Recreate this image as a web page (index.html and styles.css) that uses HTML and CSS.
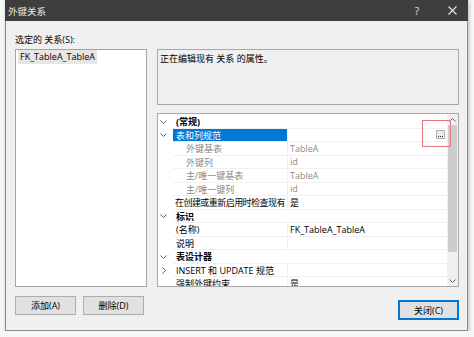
FILE: index.html
```html
<!DOCTYPE html>
<html lang="zh">
<head>
<meta charset="utf-8">
<link rel="stylesheet" href="styles.css">
</head>
<body>
<div class="dialog">
  <div class="titlebar">
    <span class="title">外键关系</span>
    <span class="tb-help">?</span>
    <span class="tb-close"><svg width="9" height="9" viewBox="0 0 9 9"><path d="M0.5 0.5L8.5 8.5M8.5 0.5L0.5 8.5" stroke="#e6e6e6" stroke-width="1.1" fill="none"/></svg></span>
  </div>
  <div class="content">
    <div class="label">选定的 关系(S):</div>
    <div></div>
    <div class="listbox"><div class="list-item">FK_TableA_TableA</div></div>
    <div class="right">
      <div class="desc">正在编辑现有 关系 的属性。</div>
      <div class="pgrid">
        <div class="rows">
          <div class="row cat"><span class="exp"><svg class="chev" viewBox="0 0 7 4"><path d="M0.5 0.5L3.5 3.5L6.5 0.5" /></svg></span><span class="name">(常规)</span></div>
          <div class="row"><span class="exp"><svg class="chev" viewBox="0 0 7 4"><path d="M0.5 0.5L3.5 3.5L6.5 0.5" /></svg></span><span class="name sel">表和列规范</span><span class="val"><span class="dots"><svg viewBox="0 0 7 7" width="7" height="7"><rect x="1" y="5" width="1" height="1"/><rect x="3" y="5" width="1" height="1"/><rect x="5" y="5" width="1" height="1"/></svg></span></span></div>
          <div class="row sub"><span class="exp"></span><span class="name">外键基表</span><span class="val">TableA</span></div>
          <div class="row sub"><span class="exp"></span><span class="name">外键列</span><span class="val">id</span></div>
          <div class="row sub"><span class="exp"></span><span class="name">主/唯一键基表</span><span class="val">TableA</span></div>
          <div class="row sub"><span class="exp"></span><span class="name">主/唯一键列</span><span class="val">id</span></div>
          <div class="row"><span class="exp"></span><span class="name tight">在创建或重新启用时检查现有</span><span class="val">是</span></div>
          <div class="row cat"><span class="exp"><svg class="chev" viewBox="0 0 7 4"><path d="M0.5 0.5L3.5 3.5L6.5 0.5" /></svg></span><span class="name">标识</span></div>
          <div class="row"><span class="exp"></span><span class="name">(名称)</span><span class="val">FK_TableA_TableA</span></div>
          <div class="row"><span class="exp"></span><span class="name">说明</span><span class="val"></span></div>
          <div class="row cat"><span class="exp"><svg class="chev" viewBox="0 0 7 4"><path d="M0.5 0.5L3.5 3.5L6.5 0.5" /></svg></span><span class="name">表设计器</span></div>
          <div class="row"><span class="exp"><svg class="chev-r" viewBox="0 0 4 7"><path d="M0.5 0.5L3.5 3.5L0.5 6.5" /></svg></span><span class="name">INSERT 和 UPDATE 规范</span><span class="val"></span></div>
          <div class="row"><span class="exp"></span><span class="name">强制外键约束</span><span class="val">是</span></div>
        </div>
        <div class="scrollbar">
          <div class="sb-arrow"><svg viewBox="0 0 7 4"><path d="M0.5 3.5L3.5 0.5L6.5 3.5" /></svg></div>
          <div class="sb-track"><div class="sb-thumb"></div></div>
          <div class="sb-arrow"><svg viewBox="0 0 7 4"><path d="M0.5 0.5L3.5 3.5L6.5 0.5" /></svg></div>
        </div>
        <div class="annot"></div>
      </div>
    </div>
    <div class="left-btns"><button class="btn">添加(A)</button><button class="btn">删除(D)</button></div>
    <div class="right-btns"><button class="btn primary">关闭(C)</button></div>
  </div>
</div>
</body>
</html>
```
FILE: styles.css
```css
* { box-sizing: border-box; }
body {
  margin: 0;
  background: #f7f7f7;
  font-family: "Open Sans", "Noto Sans CJK SC", sans-serif;
  font-size: 9px;
  color: #000;
}
.dialog {
  margin-left: 5px;
  width: 463px;
  height: 331px;
  display: flex;
  flex-direction: column;
  box-shadow: 1px 1px 4px rgba(0,0,0,0.25);
}
.titlebar {
  height: 21px;
  flex: none;
  background: #3e3e3e;
  color: #e6e6e6;
  display: flex;
  align-items: center;
  padding-left: 3px;
  font-size: 9.5px;
}
.title { flex: 1; }
.tb-help { width: 12px; text-align: center; margin-right: 23px; font-size: 10px; }
.tb-close { width: 12px; display: flex; justify-content: center; margin-right: 10px; }
.content {
  flex: 1;
  background: #f0f0f0;
  border: 1px solid #8a8a8a;
  border-top: none;
  display: grid;
  grid-template-columns: 132px 302px;
  grid-template-rows: 28px 238px auto;
  column-gap: 10px;
  padding-left: 9px;
}
.label { align-self: end; margin-bottom: 2px; line-height: 14px; }
.listbox {
  background: #fff;
  border: 1px solid #a3a3a3;
  padding: 0 1px;
}
.list-item {
  display: inline-block;
  background: #e6e6e6;
  height: 14px;
  line-height: 14px;
  padding: 0 2px;
  margin-left: 1px;
}
.right { display: flex; flex-direction: column; gap: 8px; }
.desc {
  height: 56px;
  flex: none;
  border: 1px solid #a8a8a8;
  background: #f0f0f0;
  padding: 2px 2px;
  line-height: 14px;
}
.pgrid {
  position: relative;
  height: 174px;
  flex: none;
  border: 1px solid #a8a8a8;
  background: #fff;
  display: flex;
  overflow: hidden;
}
.rows { flex: 1; padding-top: 1px; overflow: hidden; }
.row {
  height: 13.5px;
  display: grid;
  grid-template-columns: 15px 114px 1fr;
  line-height: 13px;
}
.row .name, .row .val {
  border-bottom: 1px solid #f0f0f0;
  white-space: nowrap;
  overflow: hidden;
}
.row .name { padding-left: 3px; }
.row .name.tight { padding-left: 2px; letter-spacing: -0.55px; }
.row .val { padding-left: 2px; border-left: 1px solid #f0f0f0; display: flex; align-items: center; }
.row.cat .name { grid-column: 2 / 4; font-weight: bold; }
.row.sub .name { padding-left: 13px; color: #8a8a8a; }
.row.sub .val { color: #8a8a8a; }
.row .name.sel { background: #0078d7; color: #fff; }
.exp { display: flex; align-items: center; padding-left: 2px; }
.chev { width: 7px; height: 4px; }
.chev-r { width: 4px; height: 7px; margin-left: 2px; }
.chev path, .chev-r path, .sb-arrow path { fill: none; stroke: #606060; stroke-width: 1; }
.dots {
  margin-left: auto;
  margin-right: 2px;
  width: 9px;
  height: 9px;
  border: 1px solid #b0b0b0;
  background: #ebebeb;
  display: flex;
}
.dots svg { fill: #333; }
.scrollbar {
  width: 11px;
  flex: none;
  background: #f0f0f0;
  display: flex;
  flex-direction: column;
}
.sb-arrow { height: 11px; display: flex; align-items: center; justify-content: center; }
.sb-arrow svg { width: 7px; height: 4px; }
.sb-track { flex: 1; padding: 0 1px; }
.sb-thumb { height: 127px; background: #cdcdcd; }
.annot {
  position: absolute;
  left: 264px;
  top: 6px;
  width: 29px;
  height: 27px;
  border: 1px solid #e27784;
}
.left-btns { display: flex; gap: 7px; margin-top: 9px; align-self: start; }
.right-btns { display: flex; justify-content: flex-end; margin-top: 13px; align-self: start; }
.btn {
  font: inherit;
  color: #000;
  width: 61px;
  height: 19px;
  padding: 0;
  background: #e1e1e1;
  border: 1px solid #adadad;
}
.btn.primary { height: 20px; border: 1px solid #0078d7; box-shadow: inset 0 0 0 1px #0078d7; }
```
